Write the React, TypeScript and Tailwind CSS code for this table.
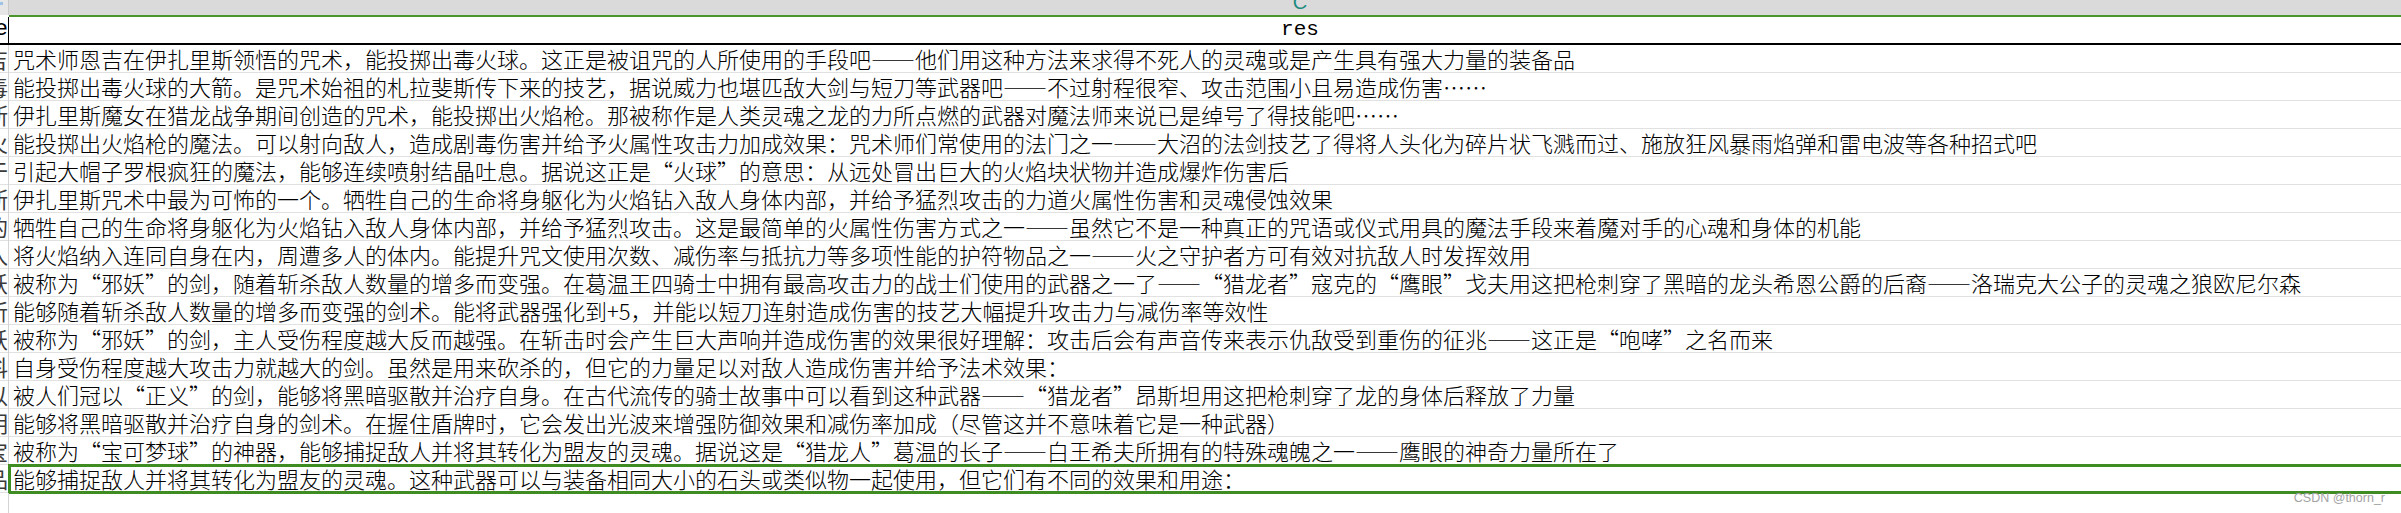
import React from "react";

const rows: { b: string; c: string }[] = [
  { b: "吉", c: "咒术师恩吉在伊扎里斯领悟的咒术，能投掷出毒火球。这正是被诅咒的人所使用的手段吧——他们用这种方法来求得不死人的灵魂或是产生具有强大力量的装备品" },
  { b: "毒", c: "能投掷出毒火球的大箭。是咒术始祖的札拉斐斯传下来的技艺，据说威力也堪匹敌大剑与短刀等武器吧——不过射程很窄、攻击范围小且易造成伤害……" },
  { b: "斯", c: "伊扎里斯魔女在猎龙战争期间创造的咒术，能投掷出火焰枪。那被称作是人类灵魂之龙的力所点燃的武器对魔法师来说已是绰号了得技能吧……" },
  { b: "火", c: "能投掷出火焰枪的魔法。可以射向敌人，造成剧毒伤害并给予火属性攻击力加成效果：咒术师们常使用的法门之一——大沼的法剑技艺了得将人头化为碎片状飞溅而过、施放狂风暴雨焰弹和雷电波等各种招式吧" },
  { b: "于", c: "引起大帽子罗根疯狂的魔法，能够连续喷射结晶吐息。据说这正是“火球”的意思：从远处冒出巨大的火焰块状物并造成爆炸伤害后" },
  { b: "斯", c: "伊扎里斯咒术中最为可怖的一个。牺牲自己的生命将身躯化为火焰钻入敌人身体内部，并给予猛烈攻击的力道火属性伤害和灵魂侵蚀效果" },
  { b: "的", c: "牺牲自己的生命将身躯化为火焰钻入敌人身体内部，并给予猛烈攻击。这是最简单的火属性伤害方式之一——虽然它不是一种真正的咒语或仪式用具的魔法手段来着魔对手的心魂和身体的机能" },
  { b: "入", c: "将火焰纳入连同自身在内，周遭多人的体内。能提升咒文使用次数、减伤率与抵抗力等多项性能的护符物品之一——火之守护者方可有效对抗敌人时发挥效用" },
  { b: "妖", c: "被称为“邪妖”的剑，随着斩杀敌人数量的增多而变强。在葛温王四骑士中拥有最高攻击力的战士们使用的武器之一了——“猎龙者”寇克的“鹰眼”戈夫用这把枪刺穿了黑暗的龙头希恩公爵的后裔——洛瑞克大公子的灵魂之狼欧尼尔森" },
  { b: "斩", c: "能够随着斩杀敌人数量的增多而变强的剑术。能将武器强化到+5，并能以短刀连射造成伤害的技艺大幅提升攻击力与减伤率等效性" },
  { b: "妖", c: "被称为“邪妖”的剑，主人受伤程度越大反而越强。在斩击时会产生巨大声响并造成伤害的效果很好理解：攻击后会有声音传来表示仇敌受到重伤的征兆——这正是“咆哮”之名而来" },
  { b: "科", c: "自身受伤程度越大攻击力就越大的剑。虽然是用来砍杀的，但它的力量足以对敌人造成伤害并给予法术效果：" },
  { b: "以", c: "被人们冠以“正义”的剑，能够将黑暗驱散并治疗自身。在古代流传的骑士故事中可以看到这种武器——“猎龙者”昂斯坦用这把枪刺穿了龙的身体后释放了力量" },
  { b: "明", c: "能够将黑暗驱散并治疗自身的剑术。在握住盾牌时，它会发出光波来增强防御效果和减伤率加成（尽管这并不意味着它是一种武器）" },
  { b: "宝", c: "被称为“宝可梦球”的神器，能够捕捉敌人并将其转化为盟友的灵魂。据说这是“猎龙人”葛温的长子——白王希夫所拥有的特殊魂魄之一——鹰眼的神奇力量所在了" },
  { b: "品", c: "能够捕捉敌人并将其转化为盟友的灵魂。这种武器可以与装备相同大小的石头或类似物一起使用，但它们有不同的效果和用途：" },
];

const cjk = "font-['SimSun','Noto_Sans_CJK_SC',sans-serif]";

export default function App() {
  return (
    <div lang="zh-CN" className="relative w-[2401px] h-[513px] overflow-hidden bg-white">
      <div className="w-[2591px]">
        {/* column header row */}
        <div className="flex h-[17px]">
          <div className="w-[8px] h-[15px] bg-[#e6e6e6] relative overflow-hidden">
            <div className="w-[3px] h-[3px] mt-[2px] bg-[#9ec3e6]" />
          </div>
          <div className="w-[1px] h-[15px] bg-[#c8c8c8]" />
          <div className="flex-1 flex flex-col">
            <div className="h-[15px] bg-[#dadada] overflow-hidden flex justify-center">
              <span className="-mt-[8px] text-[20px] leading-[20px] text-[#1e8a7e] font-['Liberation_Sans',sans-serif]">C</span>
            </div>
            <div className="h-[2px] bg-[#4a952c]" />
          </div>
        </div>

        {/* res row */}
        <div className="flex h-[28px] border-b-2 border-black">
          <div className="w-[8px] overflow-hidden flex justify-end items-center">
            <span className="whitespace-nowrap text-[22px] leading-[26px] text-black font-['Liberation_Mono',monospace]">re</span>
          </div>
          <div className="w-[1px] bg-black" />
          <div className="flex-1 flex items-center justify-center">
            <span className="text-[21px] leading-[26px] text-black font-['Liberation_Mono',monospace]">res</span>
          </div>
        </div>

        {rows.map((r, i) => {
          const selected = i === rows.length - 1;
          return (
            <div key={i} className="flex h-[28px]">
              <div className="w-[8px] overflow-hidden flex justify-end items-center border-b border-[#e1e1e1]">
                <span className={`whitespace-nowrap text-[22px] leading-[27px] text-[#3a3a3a] ${cjk}`}>{r.b}</span>
              </div>
              <div className="w-[1px] bg-[#d4d4d4]" />
              <div
                className={
                  selected
                    ? "flex-1 flex items-center pl-[4px] border-b border-[#e1e1e1] outline-[3px] outline-solid outline-[#3f8c22] -outline-offset-2"
                    : "flex-1 flex items-center pl-[4px] border-b border-[#e1e1e1]"
                }
              >
                <span className={`whitespace-nowrap text-[22px] leading-[27px] text-black font-light ${cjk}`}>{r.c}</span>
              </div>
            </div>
          );
        })}

        {/* empty row below */}
        <div className="flex h-[28px]">
          <div className="w-[8px]" />
          <div className="w-[1px] bg-[#d4d4d4]" />
          <div className="flex-1" />
        </div>
      </div>

      <div className="absolute right-[16px] bottom-[8px] text-[12.5px] leading-[14px] text-[#a3a3a3] font-['Liberation_Sans',sans-serif]">
        CSDN @thorn_r
      </div>
    </div>
  );
}
